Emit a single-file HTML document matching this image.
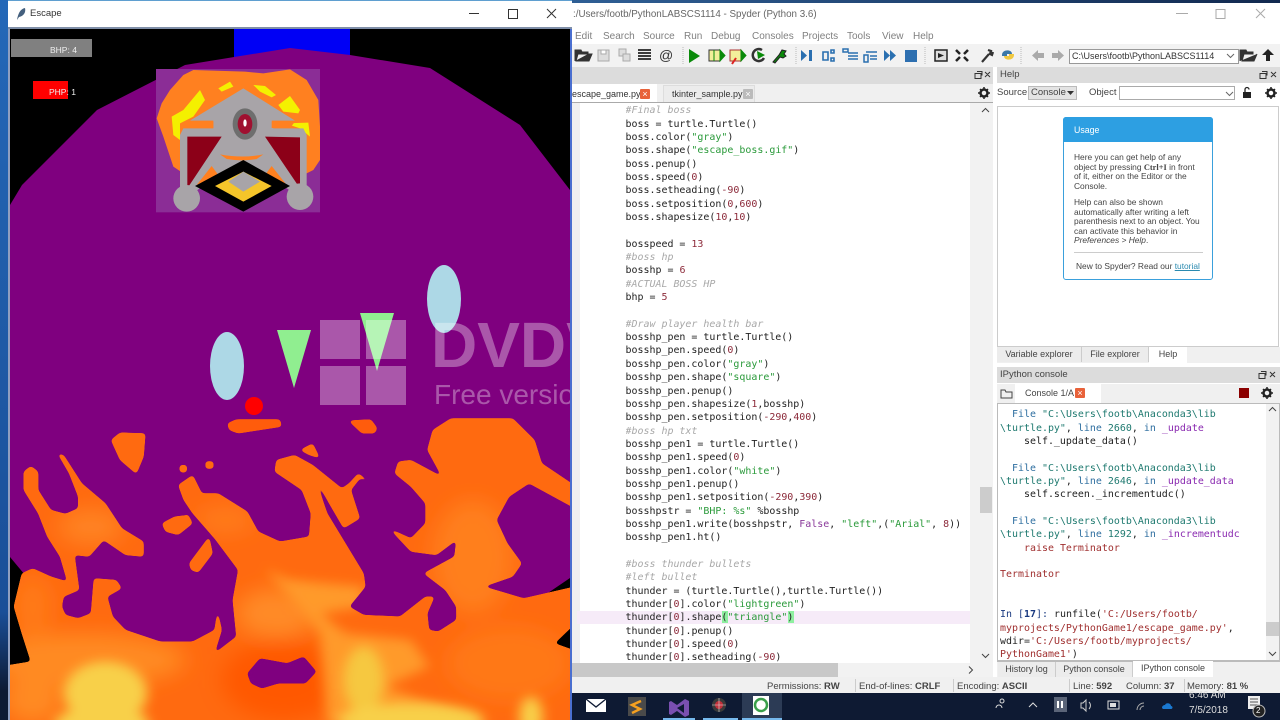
<!DOCTYPE html>
<html><head><meta charset="utf-8"><title>Escape</title>
<style>
html,body{margin:0;padding:0;width:1280px;height:720px;overflow:hidden;background:#fff;font-family:"Liberation Sans",sans-serif}
.a{position:absolute}
.t{position:absolute;white-space:nowrap;line-height:14px;font-size:10px;color:#444}
.m{color:#808080;font-size:10px}
pre{position:absolute;margin:0;font-family:"DejaVu Sans Mono",monospace;font-size:9.96px;line-height:13.35px;color:#222}
.c{color:#a8a8a8;font-style:italic}.s{color:#2a9a3a}.n{color:#8c2a3a}.k{color:#8a3a9a}
.cg{color:#1f7a70}.cb{color:#2f6fa0}.cp{color:#8a2ab0}.cr{color:#a03030}
.tab{position:absolute;line-height:15px;text-align:center;font-size:9px;color:#444;background:#ececec;border-right:1px solid #ccc}
.hb{position:absolute;background:#dcdcdc}
.h{position:absolute;white-space:nowrap;font-size:8.4px;line-height:10px;color:#444}
.xr{position:absolute;width:10px;height:10px;background:#e8623a;color:#fff;font-size:9px;line-height:10px;text-align:center;border-radius:1px}
</style></head><body>

<!-- desktop strip -->
<div class="a" style="left:0;top:0;width:8px;height:720px;background:linear-gradient(#2468b8,#1a4f98 85%,#0d1a33 96%)"></div>

<!-- Spyder window -->
<div class="a" style="left:572px;top:0;width:708px;height:3px;background:linear-gradient(90deg,#2f5f95,#12294f)"></div>
<div class="t" style="left:573px;top:8px;font-size:9.8px;color:#666">:/Users/footb/PythonLABSCS1114 - Spyder (Python 3.6)</div>
<svg class="a" style="left:1170px;top:6px" width="100" height="16" fill="none" stroke="#aaa"><path d="M6 7.500H18M46 3.500h9v9h-9zM86 3l9 9M95 3l-9 9"/></svg>
<div class="t m" style="left:575px;top:30px">Edit</div><div class="t m" style="left:603px;top:30px">Search</div><div class="t m" style="left:643px;top:30px">Source</div><div class="t m" style="left:684px;top:30px">Run</div><div class="t m" style="left:711px;top:30px">Debug</div><div class="t m" style="left:752px;top:30px">Consoles</div><div class="t m" style="left:802px;top:30px">Projects</div><div class="t m" style="left:847px;top:30px">Tools</div><div class="t m" style="left:882px;top:30px">View</div><div class="t m" style="left:913px;top:30px">Help</div>
<div class="a" style="left:572px;top:44px;width:708px;height:23px;background:#f2f2f2"></div>

<!-- toolbar -->
<svg class="a" style="left:572px;top:44px" width="708" height="23" viewBox="572 44 708 23">
<path d="M575 61V50h6l1 2h6v2h-10l-2 7h13l3-7h-4" fill="#333" stroke="#333"/>
<rect x="598" y="50" width="11" height="11" fill="#ddd" stroke="#aaa"/><rect x="601" y="50" width="5" height="4" fill="#fff" stroke="#aaa"/>
<rect x="619" y="49" width="7" height="7" fill="#ddd" stroke="#aaa"/><rect x="623" y="54" width="7" height="7" fill="#ddd" stroke="#aaa"/>
<path d="M638 50h13M638 53h13M638 56h13M638 59h13" stroke="#222" stroke-width="1.800"/>
<text x="659" y="60" font-size="14" fill="#333" font-family="Liberation Sans">@</text>
<path d="M689 49L700 56 689 63Z" fill="#0a8a0a"/>
<rect x="709" y="50" width="11" height="11" fill="#f3ef9a" stroke="#333"/><path d="M720 50v11l5-5.500z M714 50v11" fill="#0a8a0a" stroke="#0a8a0a"/>
<rect x="730" y="50" width="11" height="11" fill="#f3ef9a" stroke="#a33"/><path d="M741 50v11l5-5.500z" fill="#0a8a0a" stroke="#0a8a0a"/><path d="M732 64l4-6" stroke="#d22" stroke-width="2"/>
<path d="M762 50a6 6 0 1 0 2 8" fill="none" stroke="#333" stroke-width="2.500"/><path d="M757 51l8 4-7 4z" fill="#0a8a0a"/>
<path d="M773 62l6-7 3-5 4 1-2 3 2 2-3 2-3-1-5 6z" fill="#0a8a0a" stroke="#222"/>
<path d="M801 50l6 5.500-6 5.500zM809 50h3v11h-3z" fill="#2a6fb0"/>
<path d="M823 52h5v8h-5zM831 50h3v3h-3zM831 58h3v3h-3z" fill="none" stroke="#2a6fb0" stroke-width="1.600"/>
<path d="M843 49h5v3h-5zM848 53h10M848 56h10M848 59h10" fill="none" stroke="#2a6fb0" stroke-width="1.500"/>
<path d="M864 55h4v7h-4zM866 52h11M870 56h7M870 59h7" fill="none" stroke="#2a6fb0" stroke-width="1.500"/>
<path d="M884 50l6 5.500-6 5.500zM890 50l6 5.500-6 5.500z" fill="#2a6fb0"/>
<rect x="905" y="50" width="12" height="12" fill="#2d6fb0"/>
<rect x="935" y="50" width="12" height="11" fill="#ddd" stroke="#222" stroke-width="1.500"/><path d="M938 53l6 2.500-6 2.500z" fill="#222"/>
<path d="M956 50l4 4M968 50l-4 4M956 61l4-4M968 61l-4-4" stroke="#222" stroke-width="2.500"/>
<path d="M982 62l7-8M988 50l3 1-1 3 2 1 1-3" stroke="#333" stroke-width="2.200" fill="none"/>
<path d="M1002 55c0-6 10-6 10-1h-5v2h-5z" fill="#3b78a8"/><path d="M1014 55c0 6-10 6-10 1h5v-2h5z" fill="#f0c840"/>
<path d="M1038 50l-6 5.500 6 5.500v-3h6v-5h-6z" fill="#aaa"/><path d="M1058 50l6 5.500-6 5.500v-3h-6v-5h6z" fill="#aaa"/>
<path d="M1240 61V50h6l1 2h6v2h-9l-2 7h12l3-7" fill="#333" stroke="#333"/>
<path d="M1268 49l-6 6h4v6h4v-6h4z" fill="#222"/>
<path d="M683 47v17M796 47v17M925 47v17M1021 47v17" stroke="#bbb" stroke-dasharray="1 1"/>
</svg>
<div class="a" style="left:1069px;top:49px;width:168px;height:13px;background:#fff;border:1px solid #999"></div>
<div class="t" style="left:1072px;top:49px;font-size:9px;color:#333">C:\Users\footb\PythonLABSCS1114</div>
<svg class="a" style="left:1226px;top:53px" width="9" height="6" fill="none" stroke="#666"><path d="M1 1l3.500 3.500L8 1"/></svg>

<!-- dock headers -->
<div class="hb" style="left:572px;top:67px;width:421px;height:17px"></div>
<div class="hb" style="left:997px;top:67px;width:283px;height:16px"></div>
<div class="t" style="left:1000px;top:68px;font-size:9.500px;color:#444">Help</div>
<svg class="a" style="left:970px;top:70px" width="310" height="10" fill="none" stroke="#333"><path d="M5 3.500h6v5h-6zM7 1.500h5v4M15 2l5 5M20 2l-5 5M290 3.500h6v5h-6zM292 1.500h5v4M301 2l5 5M306 2l-5 5"/></svg>

<!-- editor tabs -->
<div class="a" style="left:572px;top:84px;width:421px;height:19px;background:#f0f0f0"></div>
<div class="a" style="left:572px;top:84px;width:85px;height:19px;background:#fff"></div>
<div class="t" style="left:572px;top:87px;font-size:9px;color:#333">escape_game.py</div>
<div class="xr" style="left:640px;top:89px">×</div>
<div class="a" style="left:663px;top:85px;width:92px;height:18px;background:#ececec;border:1px solid #ddd;box-sizing:border-box"></div>
<div class="t" style="left:672px;top:87px;font-size:9px;color:#333">tkinter_sample.py</div>
<div class="xr" style="left:743px;top:89px;background:#bbb">×</div>
<svg class="a" style="left:978px;top:87px" width="13" height="13"><circle cx="6" cy="6" r="3.500" fill="none" stroke="#222" stroke-width="2.500"/><path d="M6 0v3M6 9v3M0 6h3M9 6h3M2 2l2 2M8 8l2 2M2 10l2-2M8 4l2-2" stroke="#222" stroke-width="1.500"/></svg>
<div class="a" style="left:572px;top:102px;width:421px;height:1px;background:#aaa"></div>

<!-- editor -->
<div class="a" style="left:572px;top:103px;width:8px;height:574px;background:#f0f0f0"></div>
<div class="a" style="left:970px;top:103px;width:23px;height:560px;background:#f2f2f2"></div>
<div class="a" style="left:980px;top:487px;width:12px;height:26px;background:#ccc"></div>
<svg class="a" style="left:980px;top:106px" width="12" height="560" fill="none" stroke="#444"><path d="M2 6l3.500-3.500L9 6M2 548l3.500 3.500L9 548"/></svg>
<div class="a" style="left:577px;top:610.500px;width:393px;height:13px;background:#f6ebf8"></div>
<div class="a" style="left:722px;top:611px;width:6px;height:12px;background:#8ef0a0"></div>
<div class="a" style="left:788px;top:611px;width:6px;height:12px;background:#8ef0a0"></div>
<pre style="left:625.500px;top:104.300px;width:345px;height:559px;overflow:hidden"><span class="c">#Final boss</span>
boss = turtle.Turtle()
boss.color(<span class="s">"gray"</span>)
boss.shape(<span class="s">"escape_boss.gif"</span>)
boss.penup()
boss.speed(<span class="n">0</span>)
boss.setheading(<span class="n">-90</span>)
boss.setposition(<span class="n">0</span>,<span class="n">600</span>)
boss.shapesize(<span class="n">10</span>,<span class="n">10</span>)

bosspeed = <span class="n">13</span>
<span class="c">#boss hp</span>
bosshp = <span class="n">6</span>
<span class="c">#ACTUAL BOSS HP</span>
bhp = <span class="n">5</span>

<span class="c">#Draw player health bar</span>
bosshp_pen = turtle.Turtle()
bosshp_pen.speed(<span class="n">0</span>)
bosshp_pen.color(<span class="s">"gray"</span>)
bosshp_pen.shape(<span class="s">"square"</span>)
bosshp_pen.penup()
bosshp_pen.shapesize(<span class="n">1</span>,bosshp)
bosshp_pen.setposition(<span class="n">-290</span>,<span class="n">400</span>)
<span class="c">#boss hp txt</span>
bosshp_pen1 = turtle.Turtle()
bosshp_pen1.speed(<span class="n">0</span>)
bosshp_pen1.color(<span class="s">"white"</span>)
bosshp_pen1.penup()
bosshp_pen1.setposition(<span class="n">-290</span>,<span class="n">390</span>)
bosshpstr = <span class="s">"BHP: %s"</span> %bosshp
bosshp_pen1.write(bosshpstr, <span class="k">False</span>, <span class="s">"left"</span>,(<span class="s">"Arial"</span>, <span class="n">8</span>))
bosshp_pen1.ht()

<span class="c">#boss thunder bullets</span>
<span class="c">#left bullet</span>
thunder = (turtle.Turtle(),turtle.Turtle())
thunder[<span class="n">0</span>].color(<span class="s">"lightgreen"</span>)
thunder[<span class="n">0</span>].shape(<span class="s">"triangle"</span>)
thunder[<span class="n">0</span>].penup()
thunder[<span class="n">0</span>].speed(<span class="n">0</span>)
thunder[<span class="n">0</span>].setheading(<span class="n">-90</span>)</pre>
<div class="a" style="left:572px;top:663px;width:266px;height:14px;background:#c8c8c8"></div>
<div class="a" style="left:838px;top:663px;width:155px;height:14px;background:#f2f2f2"></div>
<svg class="a" style="left:966px;top:665px" width="10" height="10" fill="none" stroke="#444"><path d="M3 1.500l3.500 3.500L3 8.500"/></svg>

<!-- Help pane -->
<div class="t" style="left:997px;top:86px;font-size:9.500px">Source</div>
<div class="a" style="left:1028px;top:86px;width:49px;height:14px;background:#e4e4e4;border:1px solid #bbb;box-sizing:border-box"></div>
<div class="t" style="left:1031px;top:86px;font-size:9.500px">Console</div>
<svg class="a" style="left:1067px;top:91px" width="7" height="4"><path d="M0 0h7L3.500 4z" fill="#333"/></svg>
<div class="t" style="left:1089px;top:86px;font-size:9.500px">Object</div>
<div class="a" style="left:1119px;top:86px;width:116px;height:14px;background:#fff;border:1px solid #aaa;box-sizing:border-box"></div>
<svg class="a" style="left:1225px;top:91px" width="9" height="6" fill="none" stroke="#666"><path d="M1 1l3.500 3.500L8 1"/></svg>
<svg class="a" style="left:1241px;top:86px" width="38" height="14"><rect x="2" y="6" width="8" height="6" fill="#222"/><path d="M4 6V3.500a2 2 0 0 1 4 0" fill="none" stroke="#222" stroke-width="1.300"/><circle cx="30" cy="7" r="3.500" fill="none" stroke="#222" stroke-width="2.500"/><path d="M30 1v3M30 10v3M24 7h3M33 7h3M26 3l2 2M32 9l2 2M26 11l2-2M32 5l2-2" stroke="#222" stroke-width="1.500"/></svg>
<div class="a" style="left:997px;top:106px;width:282px;height:241px;background:#fff;border:1px solid #ccc;box-sizing:border-box"></div>
<div class="a" style="left:1063px;top:117px;width:150px;height:163px;border:1px solid #3aa0dc;border-radius:3px;box-sizing:border-box;background:#fff"></div>
<div class="a" style="left:1063px;top:117px;width:150px;height:25px;background:#2d9fe2;border-radius:3px 3px 0 0"></div>
<div class="t" style="left:1074px;top:123px;font-size:8.800px;color:#fff">Usage</div>
<div class="h" style="left:1074px;top:152px">Here you can get help of any</div>
<div class="h" style="left:1074px;top:161.500px">object by pressing <b style="font-family:'Liberation Serif',serif">Ctrl+I</b> in front</div>
<div class="h" style="left:1074px;top:171px">of it, either on the Editor or the</div>
<div class="h" style="left:1074px;top:180.500px">Console.</div>
<div class="h" style="left:1074px;top:197px">Help can also be shown</div>
<div class="h" style="left:1074px;top:206.500px">automatically after writing a left</div>
<div class="h" style="left:1074px;top:216px">parenthesis next to an object. You</div>
<div class="h" style="left:1074px;top:225.500px">can activate this behavior in</div>
<div class="h" style="left:1074px;top:235px"><i>Preferences &gt; Help</i>.</div>
<div class="a" style="left:1074px;top:252px;width:129px;height:1px;background:#ccc"></div>
<div class="h" style="left:1076px;top:261px">New to Spyder? Read our <span style="color:#2a8ab0;text-decoration:underline">tutorial</span></div>

<!-- help tabs -->
<div class="a" style="left:997px;top:347px;width:283px;height:16px;background:#f0f0f0"></div>
<div class="tab" style="left:997px;top:347px;width:84px">Variable explorer</div>
<div class="tab" style="left:1082px;top:347px;width:66px">File explorer</div>
<div class="tab" style="left:1149px;top:347px;width:38px;background:#fff;border:0;height:16px">Help</div>

<!-- IPython -->
<div class="hb" style="left:997px;top:367px;width:283px;height:16px"></div>
<div class="t" style="left:1000px;top:368px;font-size:9.500px">IPython console</div>
<svg class="a" style="left:1255px;top:370px" width="25" height="10" fill="none" stroke="#333"><path d="M4 3.500h6v5h-6zM6 1.500h5v4M15 2l5 5M20 2l-5 5"/></svg>
<div class="a" style="left:997px;top:384px;width:283px;height:19px;background:#f0f0f0"></div>
<svg class="a" style="left:1000px;top:388px" width="14" height="13" fill="none" stroke="#444"><path d="M1 10V2h4l1 2h6v6z"/></svg>
<div class="a" style="left:1015px;top:384px;width:86px;height:19px;background:#fff"></div>
<div class="t" style="left:1025px;top:386px;font-size:9px">Console 1/A</div>
<div class="xr" style="left:1075px;top:388px">×</div>
<div class="a" style="left:1239px;top:388px;width:10px;height:10px;background:#8b0000"></div>
<svg class="a" style="left:1261px;top:387px" width="13" height="13"><circle cx="6" cy="6" r="3.500" fill="none" stroke="#222" stroke-width="2.500"/><path d="M6 0v3M6 9v3M0 6h3M9 6h3M2 2l2 2M8 8l2 2M2 10l2-2M8 4l2-2" stroke="#222" stroke-width="1.500"/></svg>
<div class="a" style="left:997px;top:403px;width:283px;height:258px;background:#fff;border:1px solid #bbb;box-sizing:border-box"></div>
<div class="a" style="left:1266px;top:404px;width:13px;height:256px;background:#f2f2f2"></div>
<div class="a" style="left:1266px;top:622px;width:13px;height:14px;background:#ccc"></div>
<svg class="a" style="left:1267px;top:406px" width="11" height="252" fill="none" stroke="#444"><path d="M2 5l3.500-3.500L9 5M2 246l3.500 3.500L9 246"/></svg>
<pre style="left:1000px;top:408.300px;width:266px;height:252px;overflow:hidden">  <span class="cb">File </span><span class="cg">"C:\Users\footb\Anaconda3\lib</span>
<span class="cg">\turtle.py"</span>, <span class="cb">line </span><span class="cg">2660</span>, <span class="cb">in </span><span class="cp">_update</span>
    self._update_data()

  <span class="cb">File </span><span class="cg">"C:\Users\footb\Anaconda3\lib</span>
<span class="cg">\turtle.py"</span>, <span class="cb">line </span><span class="cg">2646</span>, <span class="cb">in </span><span class="cp">_update_data</span>
    self.screen._incrementudc()

  <span class="cb">File </span><span class="cg">"C:\Users\footb\Anaconda3\lib</span>
<span class="cg">\turtle.py"</span>, <span class="cb">line </span><span class="cg">1292</span>, <span class="cb">in </span><span class="cp">_incrementudc</span>
    <span class="cr">raise Terminator</span>

<span class="cr">Terminator</span>


<span style="color:#1a3a80">In [<b>17</b>]:</span> runfile(<span class="cr">'C:/Users/footb/</span>
<span class="cr">myprojects/PythonGame1/escape_game.py'</span>,
wdir=<span class="cr">'C:/Users/footb/myprojects/</span>
<span class="cr">PythonGame1'</span>)</pre>
<div class="a" style="left:997px;top:661px;width:283px;height:16px;background:#f0f0f0;border-top:1px solid #bbb;box-sizing:border-box"></div>
<div class="tab" style="left:998px;top:662px;width:57px">History log</div>
<div class="tab" style="left:1056px;top:662px;width:76px">Python console</div>
<div class="tab" style="left:1133px;top:661px;width:80px;background:#fff;border:0;height:16px">IPython console</div>

<!-- status bar -->
<div class="a" style="left:572px;top:677px;width:708px;height:16px;background:#f0f0f0"></div>
<div class="t" style="left:767px;top:680px;font-size:9.500px">Permissions: <b>RW</b></div>
<div class="t" style="left:859px;top:680px;font-size:9.500px">End-of-lines: <b>CRLF</b></div>
<div class="t" style="left:957px;top:680px;font-size:9.500px">Encoding: <b>ASCII</b></div>
<div class="t" style="left:1073px;top:680px;font-size:9.500px">Line: <b>592</b></div>
<div class="t" style="left:1126px;top:680px;font-size:9.500px">Column: <b>37</b></div>
<div class="t" style="left:1187px;top:680px;font-size:9.500px">Memory: <b>81 %</b></div>
<div class="a" style="left:855px;top:679px;width:1px;height:13px;background:#ccc"></div>
<div class="a" style="left:953px;top:679px;width:1px;height:13px;background:#ccc"></div>
<div class="a" style="left:1069px;top:679px;width:1px;height:13px;background:#ccc"></div>
<div class="a" style="left:1184px;top:679px;width:1px;height:13px;background:#ccc"></div>

<!-- taskbar -->
<div class="a" style="left:572px;top:693px;width:708px;height:27px;background:#0e1a33"></div>
<div class="a" style="left:742px;top:693px;width:40px;height:27px;background:#2c3b55"></div>
<div class="a" style="left:663px;top:718px;width:32px;height:2px;background:#76b9ed"></div>
<div class="a" style="left:703px;top:718px;width:35px;height:2px;background:#76b9ed"></div>
<div class="a" style="left:742px;top:718px;width:40px;height:2px;background:#76b9ed"></div>
<svg class="a" style="left:572px;top:693px" width="708" height="27" viewBox="572 693 708 27">
<path d="M586 699h20v13h-20z" fill="#fff"/><path d="M586 699l10 8 10-8" fill="none" stroke="#0e1a33" stroke-width="1.300"/>
<rect x="628" y="697" width="18" height="19" fill="#4a4a4a"/><path d="M641 701l-9 4 8 4-8 4" fill="none" stroke="#f5a020" stroke-width="2.500"/>
<path d="M671 701l6 4 8-6 4 2v14l-4 2-8-6-6 4-2-1v-12z" fill="#7a4fb0"/><path d="M677 708l7-4v9z" fill="#0e1a33"/>
<circle cx="719" cy="705" r="7" fill="#3a3a3a"/><circle cx="719" cy="705" r="4" fill="#c0303a"/><path d="M712 705h14M719 698v14" stroke="#ddd" stroke-width=".6"/>
<rect x="753" y="696" width="16" height="19" fill="#fff"/><circle cx="761" cy="705" r="6" fill="none" stroke="#3aa04a" stroke-width="2.500"/>
<circle cx="1002" cy="701" r="2" fill="none" stroke="#ddd"/><path d="M996 708a3 3 0 0 1 6 0" fill="none" stroke="#ddd"/>
<path d="M1029 707l4-4 4 4" fill="none" stroke="#ddd"/>
<rect x="1054" y="697" width="13" height="15" fill="#5a6478"/><path d="M1058 701v7M1062 701v7" stroke="#fff" stroke-width="2"/>
<path d="M1081 703h2l3-3v11l-3-3h-2zM1089 702a5 5 0 0 1 0 7" fill="none" stroke="#ccc"/>
<rect x="1108" y="701" width="11" height="8" fill="none" stroke="#ddd"/><rect x="1110" y="703" width="6" height="4" fill="#ddd"/>
<path d="M1137 710a7 7 0 0 1 7-7M1140 710a4 4 0 0 1 4-4" fill="none" stroke="#aaa"/>
<path d="M1162 708c0-3 3-3 3-3 1-3 6-2 6 1 2 0 2 3 0 3h-8z" fill="#1a78d0"/>
<rect x="1248" y="696" width="12" height="13" fill="#eee"/><path d="M1250 699h8M1250 702h8M1250 705h8" stroke="#555"/>
<circle cx="1259" cy="711" r="6" fill="#222" stroke="#bbb"/>
</svg>
<div class="t" style="left:1189px;top:689px;font-size:10px;color:#ddd">6:46 AM</div>
<div class="t" style="left:1189px;top:704px;font-size:10px;color:#ddd">7/5/2018</div>
<div class="t" style="left:1256px;top:704px;font-size:8px;color:#fff">2</div>

<!-- Game window -->
<div class="a" style="left:8px;top:0;width:564px;height:720px;background:#fff"></div>
<div class="a" style="left:8px;top:0;width:564px;height:1px;background:#5f9fd0"></div>
<svg class="a" style="left:15px;top:7px" width="11" height="14"><path d="M2 13C3 7 5 2 10 1c1 4-1 8-6 9z" fill="#44607e"/></svg>
<div class="t" style="left:30px;top:7px;font-size:9.500px;color:#333">Escape</div>
<svg class="a" style="left:465px;top:7px" width="95" height="13" fill="none" stroke="#333"><path d="M4 6.500H14M43.500 2.500h9v9h-9zM82 2l9 9M91 2l-9 9"/></svg>
<div class="a" style="left:8px;top:27px;width:564px;height:2px;background:#7f8fa8"></div>
<svg class="a" style="left:8px;top:29px" width="564" height="691" viewBox="8 29 564 691" xmlns="http://www.w3.org/2000/svg">
<defs>
<filter id="b" x="-60%" y="-60%" width="220%" height="220%"><feGaussianBlur stdDeviation="30"/></filter>
<filter id="b2" x="-30%" y="-30%" width="160%" height="160%"><feGaussianBlur stdDeviation="16"/></filter>
<filter id="goo" filterUnits="userSpaceOnUse" x="0" y="380" width="600" height="360" color-interpolation-filters="sRGB"><feGaussianBlur stdDeviation="1.800"/><feColorMatrix type="matrix" values="1 0 0 0 0 0 1 0 0 0 0 0 1 0 0 0 0 0 14 -6"/></filter>
<filter id="goo2" x="-20%" y="-20%" width="140%" height="140%" color-interpolation-filters="sRGB"><feGaussianBlur stdDeviation="5"/><feColorMatrix type="matrix" values="1 0 0 0 0 0 1 0 0 0 0 0 1 0 0 0 0 0 14 -6"/></filter>
<clipPath id="fc"><path transform="translate(0,400) scale(.36364,.33333)" d="M0 1020L0 800 85 785 60 700 38 620 60 520 90 505 140 530 185 545 165 470 130 410 105 340 65 270 65 215 85 198 105 215 105 270 140 330 180 342 215 325 215 290 190 220 158 160 175 165 225 250 290 310 335 385 395 425 395 470 345 465 285 420 245 470 205 465 218 570 175 590 170 620 180 645 215 655 250 640 258 535 320 540 335 565 295 590 310 650 345 690 440 725 530 725 590 690 598 630 610 690 590 760 650 710 640 600 655 510 590 415 530 340 505 300 490 255 530 225 555 280 600 280 680 335 710 395 770 425 850 410 855 340 830 270 755 215 760 180 810 165 860 195 940 265 960 250 985 220 1025 250 990 235 965 270 990 355 945 385 905 310 865 230 900 340 1000 520 1005 560 960 620 1000 645 1100 650 1170 590 1195 590 1175 640 1180 690 1205 695 1255 660 1255 620 1225 570 1165 520 1250 470 1255 420 1200 465 1130 455 1070 385 1130 415 1170 370 1170 310 1130 260 1085 220 1095 185 1130 180 1215 230 1175 150 1190 90 1240 55 1410 55 1470 120 1490 190 1640 300 1640 360 1455 250 1400 290 1365 360 1395 430 1435 490 1410 530 1330 560 1440 595 1640 545 1640 610 1525 730 1640 775 1640 1020Z"/></clipPath>
</defs>
<rect x="8" y="29" width="564" height="691" fill="#000"/>
<rect x="234" y="29" width="116" height="32" fill="#0000f5"/>
<path d="M10 205L22 185 97 110 185 65 290 48 350 55 430 68 520 125 570 190 570 578 545 595 540 690 32 690 32 590 25 575 10 557Z" fill="#7f007f"/>
<rect x="11" y="39" width="81" height="18" fill="#808080"/>
<rect x="33" y="81" width="35" height="18" fill="#f00"/>
<!-- flames -->
<g filter="url(#goo)">
<g clip-path="url(#fc)"><rect x="0" y="380" width="600" height="360" fill="#ff6a10"/>
<g transform="translate(0,400) scale(.36364,.33333)">
<g filter="url(#b)">
<ellipse cx="780" cy="840" rx="170" ry="120" fill="#ff5800"/>
<ellipse cx="230" cy="780" rx="280" ry="80" fill="#ff8a22"/>
<ellipse cx="90" cy="900" rx="80" ry="70" fill="#ff8a22"/>
<ellipse cx="250" cy="380" rx="90" ry="55" fill="#ff8222"/>
<ellipse cx="620" cy="360" rx="80" ry="40" fill="#ff7c1c"/>
<ellipse cx="1300" cy="470" rx="110" ry="170" fill="#ff7f1e"/>
<ellipse cx="1400" cy="790" rx="170" ry="110" fill="#ff7818"/>
<ellipse cx="760" cy="640" rx="110" ry="75" fill="#ff8a25"/>
<ellipse cx="90" cy="620" rx="50" ry="90" fill="#ff7a18"/>
</g>
<path d="M730 505L790 540 1000 560 1000 620 880 640 950 700 1130 720 1180 800 1060 860 1350 980 900 980 880 700Z" fill="#ff9a2c" filter="url(#b2)"/>
<g filter="url(#b2)">
<ellipse cx="290" cy="880" rx="115" ry="95" fill="#f8d048"/>
<ellipse cx="280" cy="970" rx="130" ry="50" fill="#f8d048"/>
<ellipse cx="1000" cy="840" rx="55" ry="100" fill="#f6c840"/>
<ellipse cx="1130" cy="960" rx="200" ry="50" fill="#f8d048"/>
<ellipse cx="1460" cy="950" rx="32" ry="60" fill="#f8d048"/>
</g>
</g></g>
<g transform="translate(0,400) scale(.36364,.33333)" stroke-linejoin="round">
<g fill="#ff6a10"><path d="M305 120L330 98 400 100 395 170 375 222 330 180Z"/><path fill="#ff5c0c" d="M625 70L650 58 770 58 775 80 655 100 630 90Z"/><path fill="#ff5c0c" d="M958 62L1020 58 1038 85 1030 100 995 100Z"/><rect x="494" y="195" width="20" height="22"/><rect x="565" y="184" width="22" height="22"/><path d="M825 150L860 130 880 175 850 165Z"/><path d="M445 370L480 350 520 345 505 320 530 370 490 405 455 395Z"/><path d="M520 490L575 410 585 460 545 518 525 510Z"/></g>
</g>
</g>
<g transform="translate(0,400) scale(.36364,.33333)">
<path filter="url(#goo2)" fill="#7f007f" d="M680 820L715 775 790 790 835 770 870 815 840 850 765 850 720 865 690 850Z"/>
</g>
<!-- boss sprite -->
<g transform="translate(150,60) scale(.33333)" stroke-linejoin="round">
<rect x="18" y="27" width="492" height="430" fill="#8b2d96"/>
<path d="M35 130L60 90 100 45 130 30 285 35 340 40 420 28 470 60 505 120 510 200 510 300 490 330 460 345 440 360 100 340 70 320 40 230 20 175Z" fill="#ff8020"/>
<g fill="#f4f000"><path d="M65 170L100 150 150 90 165 120 130 170 90 190 90 240 70 225Z"/><path d="M205 85L240 65 250 80 215 95Z"/><path d="M310 75L345 78 378 105 365 112 330 95Z"/><path d="M385 135L420 108 450 150 445 160 400 155Z"/><path d="M405 190L475 188 480 230 450 205Z"/></g>
<path d="M280 85L435 182 365 182 370 205 460 205 470 225 470 395 90 395 90 225 100 205 190 205 190 182 120 182Z" fill="#a8a4a8"/>
<path d="M120 185H190V204H135ZM365 185H435L420 204H365Z" fill="#ff8020"/>
<path d="M112 230L215 230 112 385ZM345 230L450 232 450 385Z" fill="#8c0018"/>
<path d="M210 283Q280 296 340 283L320 297Q280 305 230 297Z" fill="#ff8020"/>
<path d="M185 318L205 345 140 375ZM365 318L410 375 345 345Z" fill="#ff8020"/>
<path d="M135 395L160 378 400 378 425 395 280 457Z" fill="#8b2d96"/>
<circle cx="110" cy="415" r="40" fill="#a8a4a8"/><circle cx="450" cy="410" r="40" fill="#a8a4a8"/>
<path d="M280 300L420 378 280 455 135 378Z" fill="#000"/>
<path d="M195 378L280 335 365 378 280 425Z" fill="#f5c52a"/>
<path d="M280 335L330 365 280 395 235 365Z" fill="#a8a4a8"/>
<ellipse cx="285" cy="192" rx="37" ry="47" fill="#6e6e6e"/>
<ellipse cx="285" cy="192" rx="22" ry="30" fill="#a01030"/>
<ellipse cx="285" cy="189" rx="5" ry="11" fill="#fff"/>
</g>
<!-- sprites -->
<ellipse cx="227" cy="366" rx="17" ry="34" fill="#add8e6"/>
<ellipse cx="444" cy="299" rx="17" ry="34" fill="#add8e6"/>
<path d="M277 330H311L294 388Z" fill="#90ee90"/>
<path d="M360 313H394L377 371Z" fill="#90ee90"/>
<circle cx="254" cy="406" r="9" fill="#f00"/>
<!-- watermark -->
<g fill="#fff" fill-opacity=".34">
<rect x="320" y="320" width="40" height="39"/><rect x="366" y="320" width="40" height="39"/>
<rect x="320" y="366" width="40" height="39"/><rect x="366" y="366" width="40" height="39"/>
<text x="431" y="367" font-family="Liberation Sans" font-size="64" font-weight="bold">DVDV</text>
<text x="434" y="404" font-family="Liberation Sans" font-size="28">Free versio</text>
</g>
<text x="50" y="53" font-family="Liberation Sans" font-size="8.500" fill="#eee">BHP: 4</text>
<text x="49" y="95" font-family="Liberation Sans" font-size="8.500" fill="#eee">PHP: 1</text>
<rect x="570" y="29" width="2" height="691" fill="#4a6fd0"/>
<rect x="8" y="29" width="2" height="691" fill="#8f9fc0"/>
</svg>
</body></html>
